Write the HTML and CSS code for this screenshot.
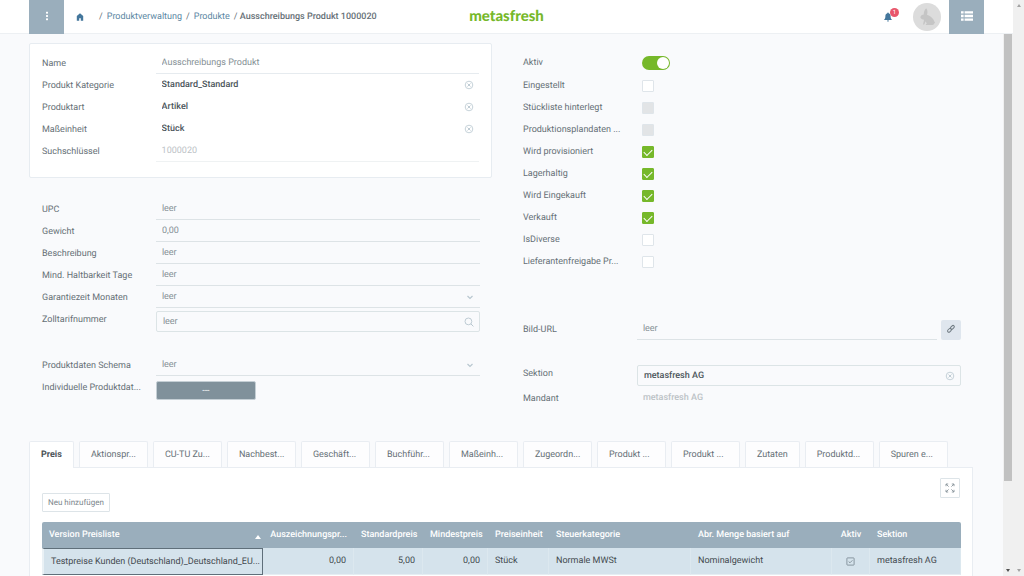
FILE: index.html
```html
<!DOCTYPE html>
<html lang="de">
<head>
    <meta charset="UTF-8">
    <meta name="viewport" content="width=device-width, initial-scale=1.0">
    <title>Ausschreibungs Produkt 1000020</title>
    <link rel="stylesheet" href="styles.css">
</head>
<body>

<svg class="sprite" aria-hidden="true">
    <symbol id="icon-clear" viewBox="0 0 10 10">
        <circle cx="5" cy="5" r="3.8" fill="none" stroke="currentColor" stroke-width="0.8"/>
        <path d="M3.5 3.5l3 3M6.5 3.5l-3 3" fill="none" stroke="currentColor" stroke-width="0.9"/>
    </symbol>
    <symbol id="icon-down" viewBox="0 0 10 10">
        <path d="M2.5 4L5 6.4 7.5 4" fill="none" stroke="currentColor" stroke-width="1.2"/>
    </symbol>
    <symbol id="icon-search" viewBox="0 0 10 10">
        <circle cx="4.4" cy="4.4" r="3.4" fill="none" stroke="currentColor" stroke-width="0.9"/>
        <path d="M6.8 6.8l2.6 2.6" fill="none" stroke="currentColor" stroke-width="1"/>
    </symbol>
</svg>

<div class="page">
    <div class="app">

        <header class="header">
            <div class="header-left">
                <button class="header-btn" aria-label="Menü">
                    <svg width="4" height="10" viewBox="0 0 4 10" fill="#fff">
                        <rect x="1" y="0.8" width="2" height="1.8"/>
                        <rect x="1" y="4.1" width="2" height="1.8"/>
                        <rect x="1" y="7.4" width="2" height="1.8"/>
                    </svg>
                </button>
                <a class="home" href="#" aria-label="Home">
                    <svg width="8" height="8" viewBox="0 0 8 8" fill="#44779c">
                        <path d="M4 0.3L0.8 3V7.7H3.2V5.2H4.8V7.7H7.2V3Z"/>
                    </svg>
                </a>
                <nav class="breadcrumb">
                    <span>/</span>
                    <a href="#">Produktverwaltung</a>
                    <span>/</span>
                    <a href="#">Produkte</a>
                    <span>/ <b>Ausschreibungs Produkt 1000020</b></span>
                </nav>
            </div>
            <div class="logo">metasfresh</div>
            <div class="header-right">
                <button class="bell" aria-label="Benachrichtigungen">
                    <svg width="8" height="10" viewBox="0 0 8 10" fill="#44779c">
                        <path d="M4 0.4C4.5 0.4 4.7 0.8 4.7 1.2C6 1.6 6.6 2.7 6.6 4C6.6 6 7 6.8 7.8 7.6V8.1H0.2V7.6C1 6.8 1.4 6 1.4 4C1.4 2.7 2 1.6 3.3 1.2C3.3 0.8 3.5 0.4 4 0.4Z"/>
                        <path d="M3 8.5H5C5 9.2 4.6 9.6 4 9.6S3 9.2 3 8.5Z"/>
                    </svg>
                    <span class="badge">1</span>
                </button>
                <button class="avatar" aria-label="Benutzer">
                    <svg width="28" height="28" viewBox="0 0 28 28">
                        <circle cx="14" cy="14" r="14" fill="#dcdcdc"/>
                        <path fill="#c5c5c5" d="M13.2 5.2C14.6 6.6 14.8 9.4 14 11.8C16.8 13 20.6 15 21.2 18.6C22.2 18.8 22.2 20.2 21.2 20.4C20.8 21.4 20 22 18.8 22H13.2C12.4 22 12.6 20.9 13.8 20.8L12.6 18.2L11.4 21.2C11 22 9.8 21.7 10.2 20.8L11 16.8C9.6 16.4 7.4 15.8 7.4 14.2C7.6 12.6 9 11.6 10.8 11.4C10.6 9.2 11.6 6.8 13.2 5.2Z"/>
                    </svg>
                </button>
                <button class="header-btn" aria-label="Aktionen">
                    <svg width="12" height="10" viewBox="0 0 12 10" fill="#fff">
                        <path d="M0 0.2h2.6v2.4H0zM3.6 0.2H12v2.4H3.6zM0 3.8h2.6v2.4H0zM3.6 3.8H12v2.4H3.6zM0 7.4h2.6v2.4H0zM3.6 7.4H12v2.4H3.6z"/>
                    </svg>
                </button>
            </div>
        </header>

        <div class="body">
            <main class="content">
                <div class="columns">

                    <div class="column">
                        <section class="group card">
                            <div class="row">
                                <label for="name">Name</label>
                                <div class="field line thick"><input type="text" id="name" value="Ausschreibungs Produkt"></div>
                            </div>
                            <div class="row">
                                <label for="kategorie">Produkt Kategorie</label>
                                <div class="field strong"><input type="text" id="kategorie" value="Standard_Standard"><button class="icon-btn" aria-label="Leeren"><svg><use href="#icon-clear"/></svg></button></div>
                            </div>
                            <div class="row">
                                <label for="art">Produktart</label>
                                <div class="field strong"><input type="text" id="art" value="Artikel"><button class="icon-btn" aria-label="Leeren"><svg><use href="#icon-clear"/></svg></button></div>
                            </div>
                            <div class="row">
                                <label for="einheit">Maßeinheit</label>
                                <div class="field strong"><input type="text" id="einheit" value="Stück"><button class="icon-btn" aria-label="Leeren"><svg><use href="#icon-clear"/></svg></button></div>
                            </div>
                            <div class="row">
                                <label for="schluessel">Suchschlüssel</label>
                                <div class="field line faint"><input type="text" id="schluessel" value="1000020" disabled></div>
                            </div>
                        </section>

                        <section class="group">
                            <div class="row">
                                <label for="upc">UPC</label>
                                <div class="field line"><input type="text" id="upc" placeholder="leer"></div>
                            </div>
                            <div class="row">
                                <label for="gewicht">Gewicht</label>
                                <div class="field line"><input type="text" id="gewicht" value="0,00"></div>
                            </div>
                            <div class="row">
                                <label for="beschreibung">Beschreibung</label>
                                <div class="field line"><input type="text" id="beschreibung" placeholder="leer"></div>
                            </div>
                            <div class="row">
                                <label for="haltbarkeit">Mind. Haltbarkeit Tage</label>
                                <div class="field line"><input type="text" id="haltbarkeit" placeholder="leer"></div>
                            </div>
                            <div class="row">
                                <label for="garantie">Garantiezeit Monaten</label>
                                <div class="field line"><select id="garantie"><option>leer</option></select><svg class="field-icon"><use href="#icon-down"/></svg></div>
                            </div>
                            <div class="row">
                                <label for="zoll">Zolltarifnummer</label>
                                <div class="field box"><input type="text" id="zoll" placeholder="leer"><svg class="field-icon"><use href="#icon-search"/></svg></div>
                            </div>
                        </section>

                        <section class="group">
                            <div class="row">
                                <label for="schema">Produktdaten Schema</label>
                                <div class="field line"><select id="schema"><option>leer</option></select><svg class="field-icon"><use href="#icon-down"/></svg></div>
                            </div>
                            <div class="row">
                                <label for="individuell">Individuelle Produktdat...</label>
                                <button class="dash-btn" id="individuell">---</button>
                            </div>
                        </section>
                    </div>

                    <div class="column right">
                        <section class="group checks">
                            <div class="row switch-row"><label for="aktiv">Aktiv</label><input type="checkbox" class="switch" id="aktiv" checked></div>
                            <div class="row"><label for="eingestellt">Eingestellt</label><input type="checkbox" class="check" id="eingestellt"></div>
                            <div class="row"><label for="stueckliste">Stückliste hinterlegt</label><input type="checkbox" class="check" id="stueckliste" disabled></div>
                            <div class="row"><label for="plandaten">Produktionsplandaten ...</label><input type="checkbox" class="check" id="plandaten" disabled></div>
                            <div class="row"><label for="provision">Wird provisioniert</label><input type="checkbox" class="check" id="provision" checked></div>
                            <div class="row"><label for="lager">Lagerhaltig</label><input type="checkbox" class="check" id="lager" checked></div>
                            <div class="row"><label for="eingekauft">Wird Eingekauft</label><input type="checkbox" class="check" id="eingekauft" checked></div>
                            <div class="row"><label for="verkauft">Verkauft</label><input type="checkbox" class="check" id="verkauft" checked></div>
                            <div class="row"><label for="diverse">IsDiverse</label><input type="checkbox" class="check" id="diverse"></div>
                            <div class="row"><label for="freigabe">Lieferantenfreigabe Pr...</label><input type="checkbox" class="check" id="freigabe"></div>
                        </section>

                        <section class="group">
                            <div class="row">
                                <label for="bild">Bild-URL</label>
                                <div class="field line"><input type="text" id="bild" placeholder="leer"></div>
                                <button class="link-btn" aria-label="Link öffnen">
                                    <svg width="10" height="10" viewBox="0 0 10 10" fill="none" stroke="#6f7a82" stroke-width="1">
                                        <rect x="-2.2" y="-1.3" width="4.4" height="2.6" rx="1.3" transform="translate(6.4 3.4) rotate(-45)"/>
                                        <rect x="-2.2" y="-1.3" width="4.4" height="2.6" rx="1.3" transform="translate(3.5 6.3) rotate(-45)"/>
                                    </svg>
                                </button>
                            </div>
                        </section>

                        <section class="group">
                            <div class="row">
                                <label for="sektion">Sektion</label>
                                <div class="field box strong"><input type="text" id="sektion" value="metasfresh AG"><button class="icon-btn" aria-label="Leeren"><svg><use href="#icon-clear"/></svg></button></div>
                            </div>
                            <div class="row">
                                <label for="mandant">Mandant</label>
                                <div class="field strong"><input type="text" id="mandant" value="metasfresh AG" disabled></div>
                            </div>
                        </section>
                    </div>
                </div>

                <div class="tabs" role="tablist">
                    <button class="tab active" role="tab">Preis</button>
                    <button class="tab wide" role="tab">Aktionspr...</button>
                    <button class="tab wide" role="tab">CU-TU Zu...</button>
                    <button class="tab wide" role="tab">Nachbest...</button>
                    <button class="tab wide" role="tab">Geschäft...</button>
                    <button class="tab wide" role="tab">Buchführ...</button>
                    <button class="tab wide" role="tab">Maßeinh...</button>
                    <button class="tab wide" role="tab">Zugeordn...</button>
                    <button class="tab wide" role="tab">Produkt ...</button>
                    <button class="tab wide" role="tab">Produkt ...</button>
                    <button class="tab" role="tab">Zutaten</button>
                    <button class="tab wide" role="tab">Produktd...</button>
                    <button class="tab wide" role="tab">Spuren e...</button>
                </div>

                <section class="panel">
                    <div class="panel-bar">
                        <button class="add-btn">Neu hinzufügen</button>
                        <button class="expand-btn" aria-label="Vollbild">
                            <svg width="10" height="10" viewBox="0 0 10 10" fill="none" stroke="#89949b" stroke-width="0.9">
                                <path d="M1 3.2V1h2.2M1 1l2.6 2.6M6.8 1H9v2.2M9 1L6.4 3.6M1 6.8V9h2.2M1 9l2.6-2.6M9 6.8V9H6.8M9 9L6.4 6.4"/>
                            </svg>
                        </button>
                    </div>
                    <table>
                        <colgroup>
                            <col class="c-version">
                            <col class="c-auszeichnung">
                            <col class="c-standard">
                            <col class="c-mindest">
                            <col class="c-einheit">
                            <col class="c-steuer">
                            <col class="c-menge">
                            <col class="c-aktiv">
                            <col class="c-sektion">
                        </colgroup>
                        <thead>
                            <tr>
                                <th class="sorted"><div>Version Preisliste<i class="sort"></i></div></th>
                                <th class="num">Auszeichnungspr...</th>
                                <th class="num">Standardpreis</th>
                                <th class="num">Mindestpreis</th>
                                <th>Preiseinheit</th>
                                <th>Steuerkategorie</th>
                                <th>Abr. Menge basiert auf</th>
                                <th class="mid">Aktiv</th>
                                <th>Sektion</th>
                            </tr>
                        </thead>
                        <tbody>
                            <tr>
                                <td class="focused">Testpreise Kunden (Deutschland)_Deutschland_EU...</td>
                                <td class="num">0,00</td>
                                <td class="num">5,00</td>
                                <td class="num">0,00</td>
                                <td>Stück</td>
                                <td>Normale MWSt</td>
                                <td>Nominalgewicht</td>
                                <td class="mid">
                                    <svg width="9" height="9" viewBox="0 0 9 9" fill="none" stroke="#75838d" stroke-width="0.8">
                                        <rect x="0.9" y="0.9" width="7.2" height="7.2" rx="0.6"/>
                                        <path d="M2.6 4.5l1.4 1.3 2.4-2.5"/>
                                    </svg>
                                </td>
                                <td>metasfresh AG</td>
                            </tr>
                        </tbody>
                    </table>
                </section>
            </main>

            <div class="scrollbar inner">
                <div class="thumb"></div>
                <i class="arrow down"></i>
            </div>
        </div>
    </div>

    <div class="scrollbar outer">
        <i class="arrow up"></i>
        <i class="arrow down"></i>
    </div>
</div>

</body>
</html>
```

FILE: styles.css
```css
* {
    box-sizing: border-box;
}
body {
    margin: 0;
    font-family: Roboto, "Liberation Sans", sans-serif;
    font-size: 9px;
    line-height: 12px;
    color: #667076;
    background: #f9fafc;
    text-rendering: geometricPrecision;
}
button, input, select {
    font: inherit;
    color: inherit;
    text-rendering: inherit;
    margin: 0;
    padding: 0;
    border: 0;
    background: none;
    outline: 0;
}
button {
    cursor: pointer;
}
svg {
    display: block;
}
a {
    color: #5b87a3;
    text-decoration: none;
}
.sprite {
    position: absolute;
    width: 0;
    height: 0;
}

.page {
    display: flex;
    height: 100vh;
    overflow: hidden;
}
.app {
    flex: 1;
    min-width: 0;
    display: flex;
    flex-direction: column;
}

/* header */
.header {
    display: grid;
    grid-template-columns: 1fr auto 1fr;
    align-items: center;
    height: 34px;
    flex-shrink: 0;
    padding: 0 29px;
    background: #fff;
    border-bottom: 1px solid #edf0f3;
}
.header-left,
.header-right {
    display: flex;
    align-items: center;
}
.header-right {
    justify-content: flex-end;
}
.header-btn {
    display: flex;
    align-items: center;
    justify-content: center;
    width: 35px;
    height: 34px;
    padding-bottom: 3px;
    background: #9aaebc;
}
.home {
    margin: 0 15px 0 12px;
}
.breadcrumb {
    display: flex;
    gap: 4px;
    white-space: nowrap;
}
.breadcrumb b {
    font-weight: 500;
}
.logo {
    font-family: Lato, sans-serif;
    font-size: 15px;
    font-weight: 900;
    line-height: 18px;
    padding-bottom: 2px;
    color: #76b82a;
}
.bell {
    position: relative;
    margin-right: 21px;
}
.badge {
    position: absolute;
    left: 6px;
    top: -4px;
    width: 9px;
    height: 9px;
    border-radius: 50%;
    background: #e8566b;
    color: #fff;
    font-size: 6px;
    line-height: 9px;
    text-align: center;
}
.avatar {
    margin-right: 8px;
}

/* form */
.body {
    flex: 1;
    min-height: 0;
    display: flex;
}
.content {
    flex: 1;
    min-width: 0;
    overflow: hidden;
    padding: 9px 30px 0 29px;
}
.columns {
    display: grid;
    grid-template-columns: 1fr 1fr;
    gap: 18px;
}
.group {
    padding: 0 12px 0 13px;
    margin-bottom: 21px;
}
.right .group {
    margin-bottom: 22px;
}
.card {
    padding: 9px 12px 14px;
    background: #fff;
    border: 1px solid #e7ecf1;
    border-radius: 2px;
}
.right .checks {
    padding-top: 9px;
    margin-bottom: 46px;
}
.row {
    display: flex;
    align-items: flex-start;
    min-height: 22px;
}
.row label {
    flex: 0 0 26%;
    line-height: 22px;
    white-space: nowrap;
}
.field {
    flex: 1;
    min-width: 0;
    display: flex;
    align-items: center;
    height: 21px;
    padding: 0 5px 0 6px;
    color: #859095;
    border-bottom: 1px solid transparent;
}
.field input,
.field select {
    flex: 1;
    min-width: 0;
    height: 20px;
    appearance: none;
}
.field input::placeholder {
    color: #859095;
    opacity: 1;
}
.field.line {
    border-color: #dde3e6;
}
.field.thick {
    border-color: #e6ebef;
}
.field.faint {
    border-color: #eff2f3;
}
.field.strong {
    font-weight: 500;
    color: #4c565b;
}
.field input:disabled {
    color: #bcc2c6;
}
.field.box {
    margin: 2px 0;
    border: 1px solid #dce4e6;
    border-radius: 2px;
}
.field.box input {
    height: 19px;
}
.field svg {
    width: 10px;
    height: 10px;
    color: #b8c6cf;
}
.dash-btn {
    width: 100px;
    height: 19px;
    margin-top: 4px;
    background: #80919b;
    border: 1px solid #c5cfd5;
    border-radius: 2px;
    color: #fff;
}
.link-btn {
    display: flex;
    align-items: center;
    justify-content: center;
    width: 20px;
    height: 20px;
    margin: 1px 0 0 4px;
    padding-bottom: 3px;
    background: #dfe6ee;
    border-radius: 2px;
}
.check {
    appearance: none;
    width: 12px;
    height: 12px;
    margin: 5px;
    background: #fff;
    border: 1px solid #dfe5ea;
    border-radius: 1px;
}
.check:disabled {
    background: #e2e4e6;
}
.check:checked {
    background: #76b82a;
    border-color: #76b82a;
}
.check:checked::after {
    content: "";
    display: block;
    width: 7px;
    height: 4px;
    margin: 2px auto;
    border: solid #fff;
    border-width: 0 0 1px 1px;
    transform: rotate(-45deg);
}
.switch-row {
    min-height: 23px;
}
.switch {
    appearance: none;
    width: 28px;
    height: 14px;
    margin: 4px 5px;
    padding: 1px;
    background: #76b82a;
    border-radius: 7px;
}
.switch::after {
    content: "";
    display: block;
    width: 12px;
    height: 12px;
    margin-left: auto;
    background: #fff;
    border-radius: 50%;
}

/* tabs */
.tabs {
    display: flex;
    gap: 5px;
    margin-top: 9px;
}
.tab {
    height: 26px;
    padding: 0 11px;
    background: #fdfdfe;
    border: 1px solid #e9edf2;
    border-bottom: 0;
    border-radius: 2px 2px 0 0;
    white-space: nowrap;
}
.tab.wide {
    width: 69px;
    text-align: left;
}
.tab.active {
    position: relative;
    height: 27px;
    margin-bottom: -1px;
    background: #fff;
    font-weight: 700;
    color: #4a5256;
}
.panel {
    background: #fff;
    border: 1px solid #e9edf2;
    padding: 10px 12px;
}
.panel-bar {
    display: flex;
    justify-content: space-between;
    align-items: flex-start;
    height: 44px;
}
.add-btn {
    height: 19px;
    margin-top: 15px;
    padding: 0 5px;
    border: 1px solid #dde4e8;
    border-radius: 1px;
    font-size: 8px;
    color: #7b868c;
}
.expand-btn {
    display: flex;
    align-items: center;
    justify-content: center;
    width: 20px;
    height: 20px;
    border: 1px solid #dde4e8;
    border-radius: 1px;
}

table {
    width: 100%;
    table-layout: fixed;
    border-collapse: separate;
    border-spacing: 0;
    color: #434a4f;
}
.c-version { width: 221px; }
.c-auszeichnung { width: 91px; }
.c-standard { width: 69px; }
.c-mindest { width: 65px; }
.c-einheit { width: 61px; }
.c-steuer { width: 142px; }
.c-menge { width: 141px; }
.c-aktiv { width: 38px; }
.c-sektion { width: 91px; }
th, td {
    height: 26px;
    padding: 0 7px;
    text-align: left;
    white-space: nowrap;
}
th {
    background: #9aaebc;
    color: #fff;
    font-weight: 500;
}
th:first-child {
    border-top-left-radius: 2px;
}
th:last-child {
    border-top-right-radius: 2px;
}
th.sorted {
    padding-right: 2px;
}
th div {
    display: flex;
    justify-content: space-between;
    align-items: center;
}
.sort {
    margin-top: 4px;
    border: solid transparent;
    border-width: 0 3px 4px;
    border-bottom-color: #fff;
}
td {
    height: 27px;
    background: #d5e3ec;
    border-right: 1px solid #dce8ef;
    border-bottom: 1px solid #e6edf2;
}
td.focused {
    padding-right: 0;
    border: 1px solid #5f6f7a;
    border-left: 2px solid #eaf1f5;
}
.num {
    text-align: right;
}
.mid {
    text-align: center;
}
.mid svg {
    margin: auto;
}

/* scrollbars */
.scrollbar {
    display: flex;
    flex-direction: column;
    justify-content: space-between;
    align-items: center;
    background: #f0f0f0;
    padding-bottom: 4px;
}
.inner {
    width: 10px;
}
.outer {
    width: 11px;
    padding-top: 4px;
}
.thumb {
    width: 8px;
    height: 83%;
    background: #c1c1c1;
}
.arrow {
    border: solid transparent;
    border-width: 0 2px;
}
.arrow.up {
    border-bottom: 3px solid #a3a3a3;
}
.arrow.down {
    border-top: 3px solid #a3a3a3;
}
.inner .arrow.down {
    border-top-color: #505050;
}
```
